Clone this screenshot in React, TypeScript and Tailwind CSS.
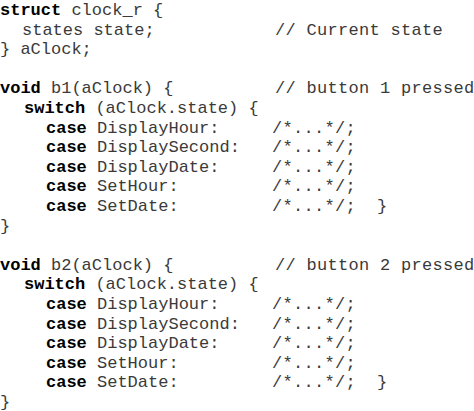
import React from 'react'

type Line = {
  indent?: number
  kw?: string
  code?: string
  note?: string
  noteX?: number
  tail?: string
}

const labels = ['DisplayHour:', 'DisplaySecond:', 'DisplayDate:', 'SetHour:', 'SetDate:']

function handler(name: string, button: number): Line[] {
  return [
    { kw: 'void', code: ` ${name}(aClock) {`, note: `// button ${button} pressed`, noteX: 275 },
    { indent: 24, kw: 'switch', code: ' (aClock.state) {' },
    ...labels.map((l, i) => ({
      indent: 46,
      kw: 'case',
      code: ' ' + l,
      note: '/*...*/;',
      noteX: 272,
      tail: i === labels.length - 1 ? '  }' : undefined,
    })),
    { code: '}' },
  ]
}

const lines: Line[] = [
  { kw: 'struct', code: ' clock_r {' },
  { indent: 22, code: 'states state;', note: '// Current state', noteX: 275 },
  { code: '} aClock;' },
  {},
  ...handler('b1', 1),
  {},
  ...handler('b2', 2),
]

function Row({ line }: { line: Line }) {
  return (
    <div className="flex h-[19.6px] whitespace-pre">
      <div className="shrink-0" style={{ width: line.noteX ?? 'auto', paddingLeft: line.indent ?? 0 }}>
        {line.kw && <span className="font-bold text-black">{line.kw}</span>}
        {line.code}
      </div>
      {line.note && (
        <div className="tracking-[0.3px]">
          {line.note}
          {line.tail}
        </div>
      )}
    </div>
  )
}

export default function App() {
  return (
    <div className="h-[411px] w-[474px] overflow-hidden bg-white pt-[1px] font-['Liberation_Mono',monospace] text-[17px] leading-[19.6px] text-[#3a3a3a]">
      {lines.map((line, i) => (
        <Row key={i} line={line} />
      ))}
    </div>
  )
}
